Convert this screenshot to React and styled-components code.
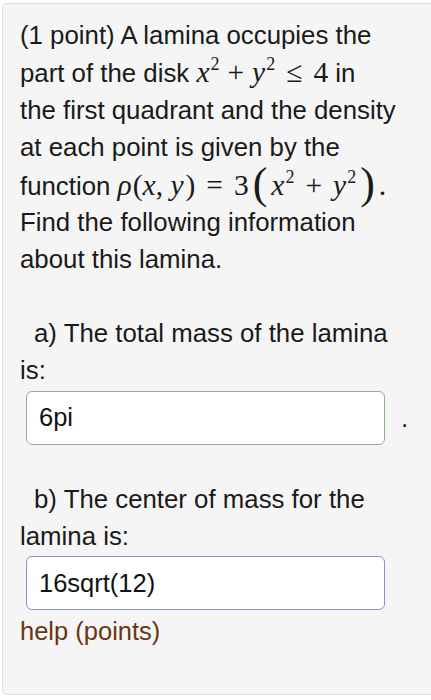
import React from "react";
import styled, { createGlobalStyle } from "styled-components";

const Global = createGlobalStyle`
  html, body { margin: 0; padding: 0; background: #ffffff; overflow: hidden; }
  body { font-family: "Liberation Sans", Arial, Helvetica, sans-serif; }
`;

const Panel = styled.div`
  margin: 3px 0 0 2px;
  width: 460px;
  height: 692px;
  box-sizing: border-box;
  background: #f5f5f5;
  border: 1px solid #dedede;
  border-radius: 5px;
  padding: 13px 0 0 17px;
  color: #1a1a1a;
  font-size: 25.8px;
`;

const Line = styled.div`
  white-space: pre;
  height: 37.4px;
  line-height: 37.4px;
  padding-left: ${(p) => p.$indent || 0}px;
  margin-top: ${(p) => p.$top || 0}px;
`;

const M = styled.span`
  font-family: "Liberation Serif", "Times New Roman", serif;
  font-size: 29.5px;
  font-style: ${(p) => (p.$i ? "italic" : "normal")};
  margin-right: ${(p) => p.$r || 0}px;
`;

const Op = styled.span`
  font-family: "Liberation Serif", "Times New Roman", serif;
  font-size: 29.5px;
  margin: 0 ${(p) => p.$gap ?? 7}px;
`;

const Sup = styled.span`
  font-family: "Liberation Serif", "Times New Roman", serif;
  font-size: 18px;
  line-height: 0;
  position: relative;
  top: -12px;
  margin-left: 1px;
`;

const BigParen = styled.span`
  font-family: "Liberation Serif", "Times New Roman", serif;
  font-size: 44px;
  line-height: 0;
  position: relative;
  top: 3px;
  margin: 0 4px;
`;

const AnswerRow = styled.div`
  display: flex;
  align-items: center;
  margin: ${(p) => p.$top}px 0 0 6px;
`;

const Field = styled.div`
  width: 359px;
  height: 54px;
  box-sizing: border-box;
  background: #ffffff;
  border: 1.5px solid ${(p) => p.$color};
  border-radius: 6px;
  display: flex;
  align-items: center;
  padding-left: 12px;
  font-size: 25.5px;
  color: #111;
`;

const Dot = styled.span`
  margin-left: 16px;
  font-size: 26px;
  line-height: 1;
`;

const Help = styled.div`
  margin-top: 3px;
  color: #6b3512;
  font-size: 25.5px;
  line-height: 36px;
`;

export default function App() {
  return (
    <>
      <Global />
      <Panel>
        <Line>(1 point) A lamina occupies the</Line>
        <Line>
          part of the disk <M $i>x</M>
          <Sup>2</Sup>
          <Op $gap={8}>+</Op>
          <M $i>y</M>
          <Sup>2</Sup>
          <Op $gap={11}>≤</Op>
          <M>4</M> in
        </Line>
        <Line>the first quadrant and the density</Line>
        <Line>at each point is given by the</Line>
        <Line>
          function <M $i $r={1}>ρ</M>
          <M>(</M>
          <M $i>x</M>
          <M>{", "}</M>
          <M $i $r={2}>y</M>
          <M>)</M>
          <Op $gap={11}>=</Op>
          <M>3</M>
          <BigParen>(</BigParen>
          <M $i>x</M>
          <Sup>2</Sup>
          <Op $gap={11}>+</Op>
          <M $i>y</M>
          <Sup>2</Sup>
          <BigParen>)</BigParen>
          <M>.</M>
        </Line>
        <Line>Find the following information</Line>
        <Line>about this lamina.</Line>
        <Line $top={36} $indent={14}>
          a) The total mass of the lamina
        </Line>
        <Line>is:</Line>
        <AnswerRow $top={1}>
          <Field $color="#8cb487">6pi</Field>
          <Dot>.</Dot>
        </AnswerRow>
        <Line $top={36} $indent={14}>
          b) The center of mass for the
        </Line>
        <Line>lamina is:</Line>
        <AnswerRow $top={1}>
          <Field $color="#8a8fd0">16sqrt(12)</Field>
        </AnswerRow>
        <Help>help (points)</Help>
      </Panel>
    </>
  );
}
